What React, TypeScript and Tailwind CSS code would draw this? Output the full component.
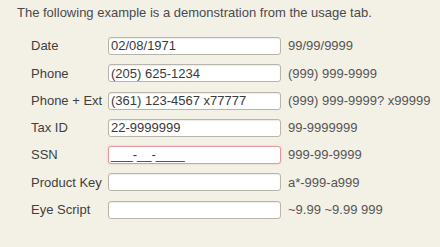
import React from "react"

const rows = [
  { label: "Date", value: "02/08/1971", hint: "99/99/9999" },
  { label: "Phone", value: "(205) 625-1234", hint: "(999) 999-9999" },
  { label: "Phone + Ext", value: "(361) 123-4567 x77777", hint: "(999) 999-9999? x99999" },
  { label: "Tax ID", value: "22-9999999", hint: "99-9999999" },
  { label: "SSN", value: "", hint: "999-99-9999", active: true },
  { label: "Product Key", value: "", hint: "a*-999-a999" },
  { label: "Eye Script", value: "", hint: "~9.99 ~9.99 999" },
]

export default function App() {
  return (
    <div className="w-[440px] h-[247px] bg-[#f3f0e6] font-['Liberation_Sans',Arial,sans-serif] text-[13px] text-[#4a4a4a] pl-[17px] pt-[5px]">
      <p className="leading-[16px]">The following example is a demonstration from the usage tab.</p>
      <div className="mt-[16px] pl-[14px] flex flex-col gap-[9.3px]">
        {rows.map((r) => (
          <div key={r.label} className="flex items-center h-[18px]">
            <span className="w-[77px] text-[#3f3f3f]">{r.label}</span>
            <div
              className={`w-[173px] h-[18px] bg-white rounded-[3px] border flex items-center pl-[2px] text-[#3a3a3a] ${
                r.active
                  ? "border-[#e39a9a] shadow-[0_0_2px_rgba(230,120,120,0.45)]"
                  : "border-[#bab5a9] shadow-[inset_0_1px_1px_rgba(0,0,0,0.08)]"
              }`}
            >
              {r.active ? <span>___-__-____</span> : r.value}
            </div>
            <span className="ml-[7px] text-[#555]">{r.hint}</span>
          </div>
        ))}
      </div>
    </div>
  )
}
